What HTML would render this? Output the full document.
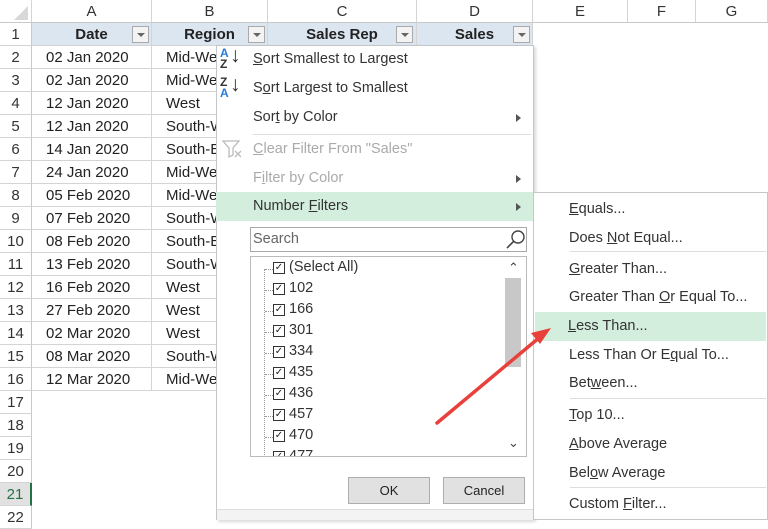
<!DOCTYPE html>
<html><head><style>
*{margin:0;padding:0;box-sizing:border-box}
body{width:768px;height:520px;overflow:hidden;background:#fff;font-family:"Liberation Sans",Arial,sans-serif;color:#222;position:relative}
.a{position:absolute;white-space:nowrap}
.ch{top:0;height:23px;background:#fff;border-right:1px solid #d4d4d4;border-bottom:1px solid #c8c8c8;text-align:center;font-size:15px;line-height:23px;color:#333}
.rh{left:0;width:32px;height:23px;border-bottom:1px solid #d4d4d4;border-right:1px solid #c8c8c8;text-align:center;font-size:15px;line-height:23px;color:#333}
.c{height:23px;border-right:1px solid #d4d4d4;border-bottom:1px solid #d4d4d4;font-size:15px;line-height:23px;padding-left:14px;overflow:hidden}
.hd{background:#dce6f1;font-weight:bold;text-align:center;padding-left:0}
.dd{position:absolute;top:3px;width:17px;height:17px;border:1px solid #aaa;background:#f3f3f3}
.dd:after{content:"";position:absolute;left:4px;top:6px;border:4px solid transparent;border-top:4px solid #666}
.mi{left:216px;width:317px;height:29px;font-size:14.5px;line-height:29px;padding-left:37px;color:#333}
.gr{color:#aaa}
.arr{position:absolute;right:12px;top:11px;border:4px solid transparent;border-left:5px solid #555;border-right:0}
.si{left:534px;width:233px;height:29px;font-size:14.5px;line-height:29px;padding-left:35px;color:#333}
.sep{height:1px;background:#ddd}
.cb{position:absolute;width:12px;height:12px;border:1px solid #333;background:#fff;font-size:10px;line-height:10px;text-align:center}
</style></head><body>
<div class="a ch" style="left:0;width:32px;background:#fff"></div>
<div class="a" style="left:14px;top:6px;width:0;height:0;border-left:14px solid transparent;border-bottom:14px solid #d8d8d8"></div>
<div class="a ch" style="left:32px;width:120px">A</div>
<div class="a ch" style="left:152px;width:116px">B</div>
<div class="a ch" style="left:268px;width:149px">C</div>
<div class="a ch" style="left:417px;width:116px">D</div>
<div class="a ch" style="left:533px;width:95px">E</div>
<div class="a ch" style="left:628px;width:68px">F</div>
<div class="a ch" style="left:696px;width:72px">G</div>

<div id="rows"></div>
<script>
var d=[["02 Jan 2020","Mid-West"],["02 Jan 2020","Mid-West"],["12 Jan 2020","West"],["12 Jan 2020","South-West"],["14 Jan 2020","South-East"],["24 Jan 2020","Mid-West"],["05 Feb 2020","Mid-West"],["07 Feb 2020","South-West"],["08 Feb 2020","South-East"],["13 Feb 2020","South-West"],["16 Feb 2020","West"],["27 Feb 2020","West"],["02 Mar 2020","West"],["08 Mar 2020","South-West"],["12 Mar 2020","Mid-West"]];
var h="";
for(var i=1;i<=22;i++){var t=23+(i-1)*23;
h+='<div class="a rh" style="top:'+t+'px;'+(i==21?'color:#217346;border-right:2px solid #217346;background:#e1e1e1':'')+'">'+i+'</div>';
if(i==1){h+='<div class="a c hd" style="left:32px;top:'+t+'px;width:120px">Date<span class="dd" style="left:100px"></span></div>';
h+='<div class="a c hd" style="left:152px;top:'+t+'px;width:116px">Region<span class="dd" style="left:96px"></span></div>';
h+='<div class="a c hd" style="left:268px;top:'+t+'px;width:149px">Sales Rep<span class="dd" style="left:128px"></span></div>';
h+='<div class="a c hd" style="left:417px;top:'+t+'px;width:116px">Sales<span class="dd" style="left:96px"></span></div>';}
else if(i<=16){h+='<div class="a c" style="left:32px;top:'+t+'px;width:120px">'+d[i-2][0]+'</div>';
h+='<div class="a c" style="left:152px;top:'+t+'px;width:116px">'+d[i-2][1]+'</div>';}
}
document.getElementById("rows").innerHTML=h;
</script>

<div class="a" style="left:216px;top:45px;width:318px;height:475px;background:#fff;border:1px solid #c6c6c6;box-shadow:2px 2px 3px rgba(0,0,0,.15)"></div>
<div class="a" style="left:220px;top:48px;font-size:12px;line-height:11px;color:#2a7bd6;font-weight:bold">A<br><span style="color:#333">Z</span></div>
<div class="a" style="left:230px;top:44px;font-size:21px;color:#333">↓</div>
<div class="a" style="left:220px;top:77px;font-size:12px;line-height:11px;color:#2a7bd6;font-weight:bold"><span style="color:#333">Z</span><br>A</div>
<div class="a" style="left:230px;top:73px;font-size:21px;color:#333">↓</div>
<div class="a mi" style="top:45px"><u>S</u>ort Smallest to Largest</div>
<div class="a mi" style="top:74px">S<u>o</u>rt Largest to Smallest</div>
<div class="a mi" style="top:103px">Sor<u>t</u> by Color<span class="arr"></span></div>
<div class="a sep" style="left:253px;top:134px;width:278px"></div>
<svg class="a" style="left:221px;top:138px" width="22" height="22"><path d="M2 3h16l-6 7v7l-4 2v-9z" fill="none" stroke="#bbb" stroke-width="1.3"/><path d="M14 13l6 6M20 13l-6 6" stroke="#bbb" stroke-width="1.3"/></svg>
<div class="a mi gr" style="top:135px"><u>C</u>lear Filter From "Sales"</div>
<div class="a mi gr" style="top:164px">F<u>i</u>lter by Color<span class="arr"></span></div>
<div class="a mi" style="top:192px;background:#d4eedd;height:29px">Number <u>F</u>ilters<span class="arr"></span></div>
<div class="a" style="left:250px;top:227px;width:277px;height:25px;border:1px solid #aaa;font-size:14.5px;line-height:23px;padding-left:2px;color:#666">Search</div>
<svg class="a" style="left:505px;top:229px" width="22" height="22"><circle cx="13" cy="8" r="6" fill="none" stroke="#444" stroke-width="1.4"/><path d="M9 12l-7 7" stroke="#444" stroke-width="1.6"/></svg>
<div class="a" style="left:250px;top:256px;width:277px;height:201px;border:1px solid #bbb;overflow:hidden">
 <div class="a" style="left:254px;top:21px;width:16px;height:89px;background:#c8c8c8"></div>
 <div class="a" style="left:257px;top:3px;font-size:13px;color:#444">⌃</div>
 <div class="a" style="left:257px;top:178px;font-size:13px;color:#444">⌄</div>
 <div class="a" style="left:13px;top:12px;width:0;height:190px;border-left:1px dotted #999"></div>
 <div id="lst"></div>
</div>
<script>
var v=["(Select All)","102","166","301","334","435","436","457","470","477"],s="";
for(var k=0;k<v.length;k++){var y=5+k*21;
s+='<div class="a" style="left:14px;top:'+(y+7)+'px;width:8px;border-top:1px dotted #999"></div>';
s+='<div class="cb" style="left:22px;top:'+y+'px">✓</div>';
s+='<div class="a" style="left:38px;top:'+(y-3)+'px;font-size:14.5px;color:#333">'+v[k]+'</div>';}
document.getElementById("lst").innerHTML=s;
</script>
<div class="a" style="left:348px;top:477px;width:82px;height:27px;background:#e1e1e1;border:1px solid #adadad;text-align:center;font-size:13px;line-height:25px">OK</div>
<div class="a" style="left:443px;top:477px;width:82px;height:27px;background:#e1e1e1;border:1px solid #adadad;text-align:center;font-size:13px;line-height:25px">Cancel</div>
<div class="a" style="left:217px;top:509px;width:316px;height:11px;background:#f3f3f3;border-top:1px solid #ddd"></div>

<div class="a" style="left:533px;top:192px;width:235px;height:328px;background:#fff;border:1px solid #c6c6c6"></div>
<div class="a si" style="top:195px"><u>E</u>quals...</div>
<div class="a si" style="top:224px">Does <u>N</u>ot Equal...</div>
<div class="a sep" style="left:570px;top:251px;width:196px"></div>
<div class="a si" style="top:255px"><u>G</u>reater Than...</div>
<div class="a si" style="top:283px">Greater Than <u>O</u>r Equal To...</div>
<div class="a si" style="top:312px;background:#d4eedd;left:535px;width:231px;padding-left:33px"><u>L</u>ess Than...</div>
<div class="a si" style="top:341px">Less Than Or E<u>q</u>ual To...</div>
<div class="a si" style="top:369px">Bet<u>w</u>een...</div>
<div class="a sep" style="left:570px;top:398px;width:196px"></div>
<div class="a si" style="top:401px"><u>T</u>op 10...</div>
<div class="a si" style="top:430px"><u>A</u>bove Average</div>
<div class="a si" style="top:459px">Bel<u>o</u>w Average</div>
<div class="a sep" style="left:570px;top:487px;width:196px"></div>
<div class="a si" style="top:490px">Custom <u>F</u>ilter...</div>

<svg class="a" style="left:0;top:0" width="768" height="520"><line x1="437" y1="423" x2="540" y2="337" stroke="#e8403a" stroke-width="3.5" stroke-linecap="round"/><path d="M551 328l-20 5 9 11z" fill="#e8403a"/></svg>
</body></html>
